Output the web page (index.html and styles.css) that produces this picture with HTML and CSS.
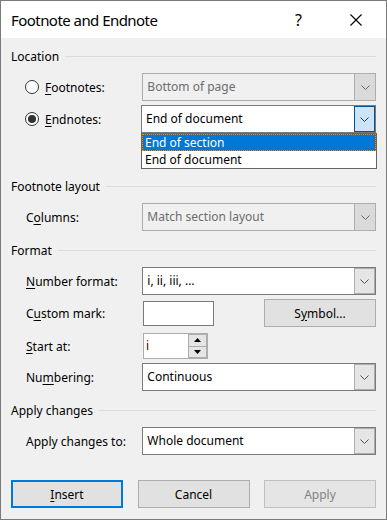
FILE: index.html
```html
<!DOCTYPE html>
<html>
<head>
  <meta charset="UTF-8">
  <title>Footnote and Endnote</title>
  <link rel="stylesheet" href="styles.css">
</head>
<body>
  <div class="dialog">
    <div class="title-bar">
      <span class="title">Footnote and Endnote</span>
      <span class="help">?</span>
      <span class="close">
        <svg width="12" height="12" viewBox="0 0 12 12"><path d="M0.5 0.5 L11.5 11.5 M11.5 0.5 L0.5 11.5" stroke="#000" stroke-width="1.1" fill="none"/></svg>
      </span>
    </div>

    <div class="content">
      <!-- Location -->
      <div class="group-head"><span>Location</span><div class="rule"></div></div>

      <div class="row row-first">
        <label class="radio-label"><span class="radio"></span><span><u>F</u>ootnotes:</span></label>
        <div class="combo disabled">
          <span class="combo-text">Bottom of page</span>
          <span class="combo-btn"><svg width="9" height="5" viewBox="0 0 9 5"><path d="M0.5 0.5 L4.5 4.5 L8.5 0.5" stroke="#666" fill="none"/></svg></span>
        </div>
      </div>

      <div class="row row-tight">
        <label class="radio-label"><span class="radio checked"></span><span><u>E</u>ndnotes:</span></label>
        <div class="combo-wrap">
          <div class="combo open">
            <span class="combo-text">End of document</span>
            <span class="combo-btn"><svg width="9" height="5" viewBox="0 0 9 5"><path d="M0.5 0.5 L4.5 4.5 L8.5 0.5" stroke="#333" fill="none"/></svg></span>
          </div>
          <div class="dropdown-list">
            <div class="list-item selected">End of section</div>
            <div class="list-item">End of document</div>
          </div>
        </div>
      </div>

      <div class="row row-convert">
        <span class="spacer"></span>
        <button class="btn">Con<u>v</u>ert...</button>
      </div>

      <!-- Footnote layout -->
      <div class="group-head head-gap"><span>Footnote layout</span><div class="rule"></div></div>

      <div class="row row-first">
        <span class="label">C<u>o</u>lumns:</span>
        <div class="combo disabled">
          <span class="combo-text">Match section layout</span>
          <span class="combo-btn"><svg width="9" height="5" viewBox="0 0 9 5"><path d="M0.5 0.5 L4.5 4.5 L8.5 0.5" stroke="#666" fill="none"/></svg></span>
        </div>
      </div>

      <!-- Format -->
      <div class="group-head head-gap-small"><span>Format</span><div class="rule"></div></div>

      <div class="row row-first">
        <span class="label"><u>N</u>umber format:</span>
        <div class="combo">
          <span class="combo-text">i, ii, iii, ...</span>
          <span class="combo-btn"><svg width="9" height="5" viewBox="0 0 9 5"><path d="M0.5 0.5 L4.5 4.5 L8.5 0.5" stroke="#555" fill="none"/></svg></span>
        </div>
      </div>

      <div class="row row-tight">
        <span class="label">C<u>u</u>stom mark:</span>
        <span class="textbox mark-box"></span>
        <span class="spacer"></span>
        <button class="btn">S<u>y</u>mbol...</button>
      </div>

      <div class="row row-spin">
        <span class="label"><u>S</u>tart at:</span>
        <div class="spinner">
          <span class="spin-text">i</span>
          <span class="spin-btns">
            <span class="spin-btn"><svg width="7" height="4" viewBox="0 0 7 4"><path d="M0 4 L3.5 0 L7 4 Z" fill="#000"/></svg></span>
            <span class="spin-btn"><svg width="7" height="4" viewBox="0 0 7 4"><path d="M0 0 L3.5 4 L7 0 Z" fill="#000"/></svg></span>
          </span>
        </div>
      </div>

      <div class="row row-tight">
        <span class="label">Nu<u>m</u>bering:</span>
        <div class="combo">
          <span class="combo-text">Continuous</span>
          <span class="combo-btn"><svg width="9" height="5" viewBox="0 0 9 5"><path d="M0.5 0.5 L4.5 4.5 L8.5 0.5" stroke="#555" fill="none"/></svg></span>
        </div>
      </div>

      <!-- Apply changes -->
      <div class="group-head head-gap-small"><span>Apply changes</span><div class="rule"></div></div>

      <div class="row row-first">
        <span class="label">Apply changes to:</span>
        <div class="combo">
          <span class="combo-text">Whole document</span>
          <span class="combo-btn"><svg width="9" height="5" viewBox="0 0 9 5"><path d="M0.5 0.5 L4.5 4.5 L8.5 0.5" stroke="#555" fill="none"/></svg></span>
        </div>
      </div>

      <div class="button-row">
        <button class="btn default"><u>I</u>nsert</button>
        <button class="btn">Cancel</button>
        <button class="btn" disabled>Apply</button>
      </div>
    </div>
  </div>
</body>
</html>
```

FILE: styles.css
```css
/* Global */
body {
  margin: 0;
  padding: 0;
  background-color: #f0f0f0;
  font-family: "Noto Sans", "Liberation Sans", sans-serif;
  font-size: 12px;
  color: #000;
}
u {
  text-decoration: underline;
  text-underline-offset: 2px;
}
/* Dialog frame */
.dialog {
  width: 387px;
  height: 520px;
  box-sizing: border-box;
  border: 1px solid #7a7a7a;
  background-color: #f0f0f0;
}
.title-bar {
  height: 37px;
  background-color: #fff;
  display: flex;
  align-items: center;
}
.title {
  font-size: 15px;
  margin-left: 10px;
  flex: 1;
  letter-spacing: -0.55px;
}
.help {
  font-size: 16px;
  width: 14px;
  margin-right: 41px;
}
.close {
  display: flex;
  margin-right: 24px;
}
/* Content */
.content {
  padding: 11px 10px 0 10px;
}
.group-head {
  display: flex;
  align-items: center;
  height: 16px;
  line-height: 16px;
}
.group-head .rule {
  flex: 1;
  height: 1px;
  margin-left: 6px;
  margin-top: -1px;
  background-color: #dcdcdc;
}
.head-gap {
  margin-top: 14px;
}
.head-gap-small {
  margin-top: 12px;
}
.row {
  display: flex;
  align-items: center;
  height: 28px;
  padding-left: 15px;
}
.row-first {
  margin-top: 8px;
}
.row-tight {
  margin-top: 4px;
}
.row-convert {
  margin-top: 5px;
  height: 27px;
}
.row-spin {
  margin-top: 6px;
  height: 26px;
}
.label {
  width: 117px;
}
.spacer {
  flex: 1;
}
/* Radio buttons */
.radio-label {
  display: flex;
  align-items: center;
  width: 117px;
}
.radio {
  width: 12px;
  height: 12px;
  border: 1px solid #333;
  border-radius: 50%;
  background-color: #fff;
  margin-left: -1px;
  margin-right: 6px;
  position: relative;
}
.radio.checked::after {
  content: "";
  position: absolute;
  left: 2px;
  top: 2px;
  width: 8px;
  height: 8px;
  border-radius: 50%;
  background-color: #333;
}
/* Combo boxes */
.combo {
  width: 235px;
  height: 28px;
  box-sizing: border-box;
  display: flex;
  border: 1px solid #7a7a7a;
  background-color: #fff;
}
.combo-text {
  flex: 1;
  line-height: 26px;
  padding-left: 4px;
}
.combo-btn {
  width: 19px;
  display: flex;
  align-items: center;
  justify-content: center;
  background-color: #e5e5e5;
  border: 1px solid #adadad;
}
.combo.disabled {
  border-color: #adadad;
  background-color: #f0f0f0;
  color: #6d6d6d;
}
.combo.disabled .combo-btn {
  background-color: #dadada;
  border-width: 0 0 0 1px;
  width: 20px;
}
.combo.open .combo-btn {
  background-color: #cce4f7;
  border: 1px solid #005499;
}
.combo-wrap {
  position: relative;
}
.dropdown-list {
  position: absolute;
  top: 28px;
  left: 0;
  width: 236px;
  box-sizing: border-box;
  border: 1px solid #646464;
  background-color: #fff;
  z-index: 10;
}
.list-item {
  height: 17px;
  line-height: 17px;
  padding-left: 3px;
}
.list-item.selected {
  background-color: #0078d7;
  color: #fff;
  outline: 1px dotted #f48a1c;
  outline-offset: -1px;
}
/* Text boxes and spinner */
.textbox {
  height: 25px;
  box-sizing: border-box;
  border: 1px solid #7a7a7a;
  background-color: #fff;
}
.mark-box {
  width: 71px;
}
.spinner {
  display: flex;
  height: 26px;
  box-sizing: border-box;
  border: 1px solid #adadad;
  background-color: #fff;
}
.spin-text {
  width: 44px;
  line-height: 24px;
  padding-left: 2px;
  box-sizing: border-box;
  color: #400;
}
.spin-btns {
  display: flex;
  flex-direction: column;
  width: 19px;
}
.spin-btn {
  flex: 1;
  display: flex;
  align-items: center;
  justify-content: center;
  background-color: #e5e5e5;
  border: 1px solid #adadad;
}
.spin-btn + .spin-btn {
  border-top: none;
}
/* Buttons */
.btn {
  width: 112px;
  height: 28px;
  font-family: inherit;
  font-size: 12px;
  color: #000;
  background-color: #e1e1e1;
  border: 1px solid #adadad;
  padding: 0;
}
.btn.default {
  border: 2px solid #0078d7;
}
.btn:disabled {
  color: #838383;
  background-color: #e5e5e5;
  border-color: #bfbfbf;
}
.button-row {
  display: flex;
  justify-content: space-between;
  margin-top: 25px;
}
```
